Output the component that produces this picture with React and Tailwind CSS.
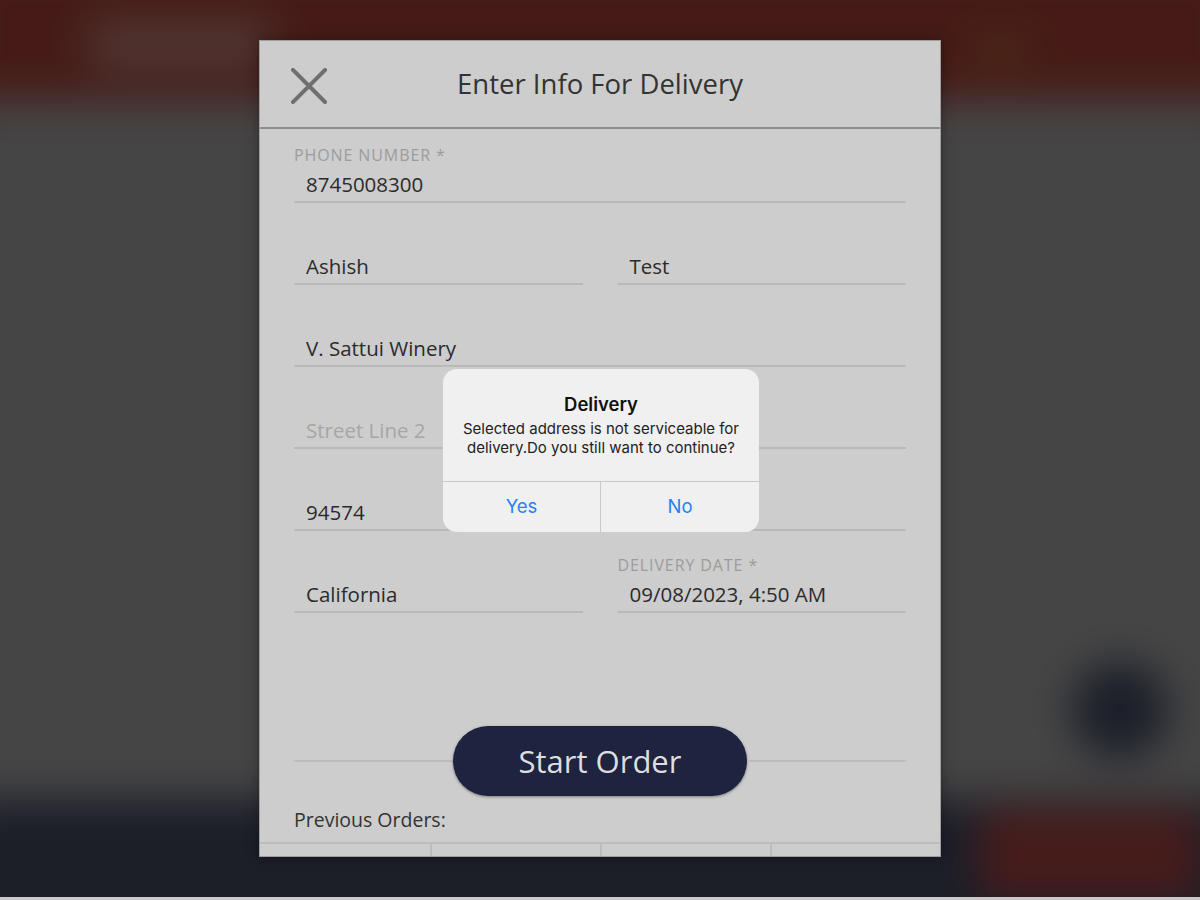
import React from "react";

const fieldFont = { fontFamily: '"Open Sans", "Liberation Sans", sans-serif' };

const Field = ({ label, value, placeholder, first }) => (
    <div className={`flex flex-col justify-end ${first ? "h-[74px]" : "h-[82px]"}`}>
        {label && (
            <div className="mb-[7px] text-[16px] leading-[20px] tracking-[0.9px] uppercase text-[#9c9c9c]">
                {label}
            </div>
        )}
        <div
            className={`border-b-2 border-[#b9b9b9] pb-[5px] pl-3 text-[20.5px] leading-[24px] ${
                placeholder ? "text-[#a6a6a6]" : "text-[#2b2b2b]"
            }`}
        >
            {value || placeholder}
        </div>
    </div>
);

const Backdrop = () => (
    <div className="absolute -inset-[40px] flex flex-col bg-[#454545] blur-[20px]">
        <div className="relative h-[140px] bg-[#461b17]">
            <div className="absolute left-[130px] top-[60px] h-[50px] w-[180px] rounded bg-[#4f3632]" />
            <div className="absolute left-[1010px] top-[75px] h-[30px] w-[60px] rounded-full bg-[#4d2a16]" />
        </div>
        <div className="relative flex-1 bg-[#454545]">
            <div className="absolute left-[1112px] top-[562px] h-[96px] w-[96px] rounded-full bg-[#1c1f29]" />
        </div>
        <div className="flex h-[140px] justify-end bg-[#1c1e28] pr-[40px] pt-[10px]">
            <div className="h-[90px] w-[220px] rounded-lg bg-[#471c1b]" />
        </div>
    </div>
);

const CloseIcon = () => (
    <svg width="36" height="36" viewBox="0 0 36 36" fill="none">
        <path d="M2 2 L34 34 M34 2 L2 34" stroke="#6f6f6f" strokeWidth="4" strokeLinecap="square" />
    </svg>
);

const Alert = () => (
    <div
        className="absolute left-[183px] top-[328px] w-[316px] overflow-hidden rounded-[14px] bg-[#f0f0f0] text-center"
        style={{ fontFamily: 'Inter, Roboto, "Liberation Sans", sans-serif' }}
    >
        <div className="px-3 pb-[24px] pt-[24px]">
            <div className="text-[18.5px] font-semibold leading-[22px] text-[#111]">Delivery</div>
            <div className="mt-[4px] text-[15px] leading-[19px] text-[#222]">
                Selected address is not serviceable for delivery.Do you still want to continue?
            </div>
        </div>
        <div className="grid h-[51px] grid-cols-2 border-t border-[#c9c9c9] text-[18.5px] text-[#1f82f7]">
            <div className="flex items-center justify-center border-r border-[#c9c9c9]">Yes</div>
            <div className="flex items-center justify-center">No</div>
        </div>
    </div>
);

export default function App() {
    return (
        <div className="relative h-[900px] w-full overflow-hidden bg-[#454545]">
            <Backdrop />
            <div className="absolute bottom-0 left-0 h-[3px] w-full bg-[#c9c9c9]" />

            <div
                className="absolute left-[259px] top-[40px] flex h-[817px] w-[682px] flex-col overflow-hidden border border-[#9e9e9e] bg-[#cdcdcd] shadow-[0_0_12px_rgba(0,0,0,0.35)]"
                style={fieldFont}
            >
                <div className="relative flex h-[88px] shrink-0 items-center justify-center border-b-2 border-[#8c8c8c]">
                    <button className="absolute left-[31px] top-[27px]">
                        <CloseIcon />
                    </button>
                    <h1 className="text-[27.5px] text-[#333]">Enter Info For Delivery</h1>
                </div>

                <div className="flex flex-col px-[34px]">
                    <Field first label="Phone Number *" value="8745008300" />
                    <div className="grid grid-cols-2 gap-x-[35px]">
                        <Field value="Ashish" />
                        <Field value="Test" />
                    </div>
                    <Field value="V. Sattui Winery" />
                    <Field placeholder="Street Line 2" />
                    <div className="grid grid-cols-2 gap-x-[35px]">
                        <Field value="94574" />
                        <Field value="" />
                    </div>
                    <div className="grid grid-cols-2 gap-x-[35px]">
                        <Field value="California" />
                        <Field label="Delivery Date *" value="09/08/2023, 4:50 AM" />
                    </div>

                    <div className="mt-[113px] flex h-[70px] items-center">
                        <div className="h-[2px] flex-1 bg-[#bdbdbd]" />
                        <button className="h-[70px] w-[294px] rounded-full bg-[#1e2340] text-[31px] text-[#dedede] shadow-[0_1px_3px_rgba(0,0,0,0.4)]">
                            Start Order
                        </button>
                        <div className="h-[2px] flex-1 bg-[#bdbdbd]" />
                    </div>

                    <div className="mt-[12px] text-[19.5px] font-medium leading-[24px] text-[#333]">
                        Previous Orders:
                    </div>
                </div>

                <div className="mt-[10px] grid flex-1 grid-cols-4 border-t-2 border-[#bdbdbd]">
                    <div />
                    <div className="border-l-2 border-[#bdbdbd]" />
                    <div className="border-l-2 border-[#bdbdbd]" />
                    <div className="border-l-2 border-[#bdbdbd]" />
                </div>

                <Alert />
            </div>
        </div>
    );
}
